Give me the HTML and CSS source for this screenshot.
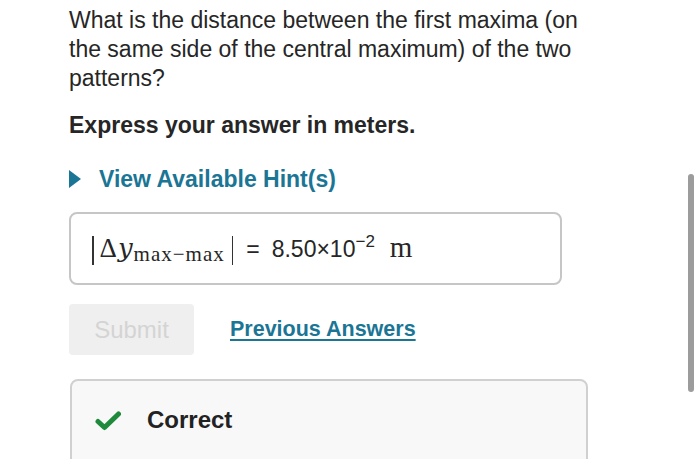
FILE: index.html
```html
<!DOCTYPE html>
<html>
<head>
<meta charset="utf-8">
<link rel="stylesheet" href="styles.css">
</head>
<body>
<div class="page">
  <p class="question">What is the distance between the first maxima (on the same side of the central maximum) of the two patterns?</p>
  <p class="instr">Express your answer in meters.</p>
  <div class="hint">
    <svg class="tri" width="12" height="18" viewBox="0 0 12 18"><path d="M0 0 L12 9 L0 18 Z" fill="#1b7595"/></svg>
    <span>View Available Hint(s)</span>
  </div>
  <div class="answer">
    <span class="expr"><span class="bar"></span><span class="delta">Δ</span><i class="y">y</i><span class="sub">max−max</span><span class="bar bar-r"></span><span class="eq">=</span><span class="val">8.50×10<span class="sup">−2</span></span><span class="unit">m</span></span>
  </div>
  <div class="actions">
    <button class="submit">Submit</button>
    <a class="prev" href="#">Previous Answers</a>
  </div>
  <div class="result">
    <svg class="check" width="26" height="20" viewBox="0 0 26 20"><path d="M3 10.5 L9.5 16.5 L23.5 3" fill="none" stroke="#1f8a3c" stroke-width="5" stroke-linecap="round" stroke-linejoin="round"/></svg>
    <span>Correct</span>
  </div>
</div>
<div class="scrollbar"></div>
</body>
</html>
```
FILE: styles.css
```css
html, body {
  margin: 0;
  padding: 0;
  background: #fff;
  overflow: hidden;
}
body {
  font-family: "Liberation Sans", Arial, sans-serif;
  color: #262626;
  width: 700px;
  height: 459px;
  position: relative;
}
.page {
  padding-left: 69px;
  width: 528px;
}
.question {
  margin: 0;
  padding-top: 6px;
  font-size: 23px;
  line-height: 29px;
}
.instr {
  margin: 18px 0 0 0;
  font-size: 23px;
  font-weight: bold;
  line-height: 28.5px;
}
.hint {
  display: flex;
  align-items: center;
  margin-top: 25px;
  color: #1b7595;
  font-size: 23px;
  font-weight: bold;
  line-height: 28.5px;
}
.tri {
  margin-left: 0;
  margin-right: 18px;
}
.answer {
  margin-top: 19px;
  width: 493px;
  height: 73px;
  box-sizing: border-box;
  border: 2px solid #c6c6c6;
  border-radius: 8px;
  display: flex;
  align-items: center;
  padding-left: 21px;
  padding-top: 4px;
}
.expr {
  font-size: 23px;
  line-height: 40px;
  white-space: nowrap;
}
.bar {
  display: inline-block;
  width: 1.5px;
  height: 29px;
  background: #333;
  vertical-align: -8px;
  margin-right: 6px;
}
.bar-r {
  margin-left: 7px;
  margin-right: 0;
}
.delta {
  font-family: "Liberation Serif", "Times New Roman", serif;
  font-size: 27px;
}
.y {
  font-family: "DejaVu Serif", serif;
  font-style: italic;
  font-size: 26px;
  margin-left: 1px;
  margin-right: 1px;
}
.sub {
  font-family: "Liberation Serif", "Times New Roman", serif;
  font-size: 21px;
  letter-spacing: 1px;
  vertical-align: -4px;
}
.eq {
  margin-left: 13px;
  margin-right: 12px;
}
.sup {
  font-size: 17px;
  vertical-align: 10px;
  line-height: 0;
}
.unit {
  font-family: "Liberation Serif", "Times New Roman", serif;
  font-size: 29px;
  margin-left: 15px;
}
.actions {
  display: flex;
  align-items: center;
  margin-top: 19px;
}
.submit {
  width: 125px;
  height: 51px;
  border: none;
  border-radius: 4px;
  background: #efefef;
  color: #d4d4d4;
  font-family: "Liberation Sans", Arial, sans-serif;
  font-size: 24px;
  padding: 0;
}
.prev {
  margin-left: 36px;
  color: #1b7595;
  font-size: 21.5px;
  font-weight: bold;
  text-decoration: underline;
  text-decoration-thickness: 1.5px;
  text-underline-offset: 3px;
}
.result {
  margin-top: 24px;
  margin-left: 1px;
  width: 518px;
  height: 100px;
  box-sizing: border-box;
  border: 2px solid #d0d0d0;
  border-radius: 8px;
  background: #f8f8f8;
  display: flex;
  align-items: flex-start;
  padding-left: 23px;
  padding-top: 25px;
  font-size: 24px;
  font-weight: bold;
  line-height: 28px;
  color: #222;
}
.check {
  margin-top: 5px;
  margin-right: 26px;
}
.scrollbar {
  position: absolute;
  left: 688px;
  top: 174px;
  width: 6px;
  height: 218px;
  border-radius: 3px;
  background: #9c9c9c;
}
```
